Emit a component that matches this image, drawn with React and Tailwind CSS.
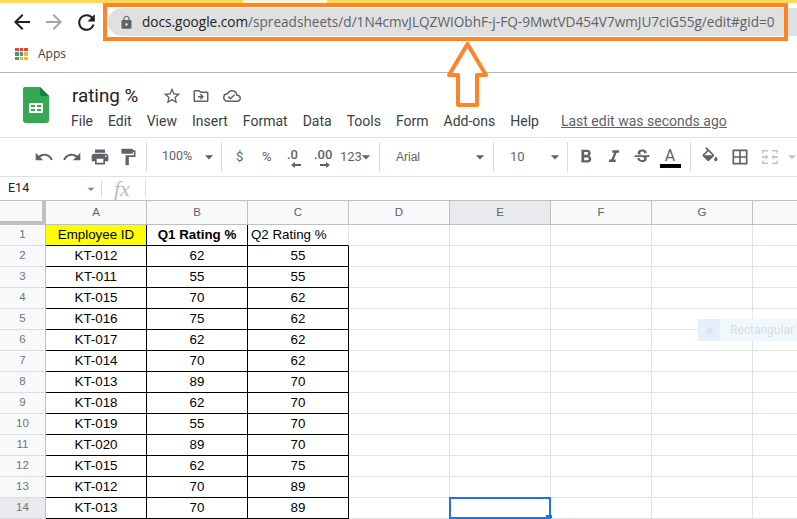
import {
  MdArrowBack,
  MdArrowForward,
  MdArrowDropDown,
  MdBorderAll,
  MdFormatBold,
  MdFormatItalic,
  MdFormatPaint,
  MdLock,
  MdOutlineCloudDone,
  MdOutlineDriveFileMove,
  MdPrint,
  MdRedo,
  MdRefresh,
  MdStarBorder,
  MdStrikethroughS,
  MdUndo,
} from "react-icons/md";

const menuItems = ["File", "Edit", "View", "Insert", "Format", "Data", "Tools", "Form", "Add-ons", "Help"];
const columns = ["A", "B", "C", "D", "E", "F", "G", ""];
const rows = [
  ["KT-012", 62, 55],
  ["KT-011", 55, 55],
  ["KT-015", 70, 62],
  ["KT-016", 75, 62],
  ["KT-017", 62, 62],
  ["KT-014", 70, 62],
  ["KT-013", 89, 70],
  ["KT-018", 62, 70],
  ["KT-019", 55, 70],
  ["KT-020", 89, 70],
  ["KT-015", 62, 75],
  ["KT-012", 70, 89],
  ["KT-013", 70, 89],
];
const appColors = [
  "bg-[#ea4335]", "bg-[#ea4335]", "bg-[#ea4335]",
  "bg-[#34a853]", "bg-[#4285f4]", "bg-[#fbbc04]",
  "bg-[#34a853]", "bg-[#fbbc04]", "bg-[#fbbc04]",
];

function Divider({ className = "" }) {
  return <div className={"w-px h-[30px] bg-[#dadce0] shrink-0 " + className} />;
}

function Tool({ icon: Icon, size = 20, color = "text-[#5f6368]" }) {
  return (
    <div className={"w-[28px] flex justify-center shrink-0 " + color}>
      <Icon size={size} />
    </div>
  );
}

function Caret({ className = "" }) {
  return <MdArrowDropDown size={20} className={"text-[#5f6368] shrink-0 " + className} />;
}

function SheetsLogo() {
  return (
    <svg width="26" height="36" viewBox="0 0 26 36" className="shrink-0">
      <path d="M2 0H17L26 9V33a3 3 0 0 1-3 3H3a3 3 0 0 1-3-3V2a2 2 0 0 1 2-2Z" fill="#34a853" />
      <path d="M17 0L26 9H19a2 2 0 0 1-2-2Z" fill="#188038" />
      <path d="M6 16H20V26H6Z" fill="#fff" />
      <path d="M8 18H12V20H8ZM14 18H18V20H14ZM8 22H12V24H8ZM14 22H18V24H14Z" fill="#34a853" />
    </svg>
  );
}

function MergeIcon() {
  return (
    <svg width="18" height="16" viewBox="0 0 18 16" fill="#c4c6c9">
      <path d="M1 1H7V2.5H2.5V4.5H1ZM11 1H17V4.5H15.5V2.5H11ZM1 11.5H2.5V13.5H7V15H1ZM15.5 11.5H17V15H11V13.5H15.5Z" />
      <path d="M1 7H5V5.5L7.5 8L5 10.5V9H1ZM17 7H13V5.5L10.5 8L13 10.5V9H17Z" />
    </svg>
  );
}

function FillIcon() {
  return (
    <svg width="20" height="20" viewBox="0 0 24 24" fill="#5f6368">
      <path d="M16.56 8.94L7.62 0 6.21 1.41l2.38 2.38-5.15 5.15c-.59.59-.59 1.54 0 2.12l5.5 5.5c.29.29.68.44 1.06.44s.77-.15 1.06-.44l5.5-5.5c.59-.58.59-1.53 0-2.12zM5.21 10L10 5.21 14.79 10H5.21zM19 11.5s-2 2.17-2 3.5c0 1.1.9 2 2 2s2-.9 2-2c0-1.33-2-3.5-2-3.5z" />
    </svg>
  );
}

function Decimal({ label, width, right }) {
  return (
    <div className={"flex flex-col shrink-0 " + width}>
      <span className="text-[13px] leading-[13px] font-medium mt-[2px]">{label}</span>
      <svg width="10" height="6" viewBox="0 0 10 6" className={"mt-[1px] " + (right ? "ml-[6px]" : "ml-[4px]")} fill="#5f6368">
        {right ? <path d="M0 2H6V0L10 3L6 6V4H0Z" /> : <path d="M10 2H4V0L0 3L4 6V4H10Z" />}
      </svg>
    </div>
  );
}

function Cell({ children, className = "" }) {
  return <div className={"relative flex items-center justify-center min-w-0 overflow-visible " + className}>{children}</div>;
}

function Row({ number, data }) {
  const active = number === 14;
  return (
    <>
      <Cell className={"border-r border-b border-r-[#c0c0c0] border-b-[#dadce0] text-[11.5px] text-[#70757a] " + (active ? "bg-[#e8eaed]" : "bg-[#f8f9fa]")}>
        {number}
      </Cell>
      {data.map((value, i) => (
        <Cell key={i} className="border-r border-b border-black text-[13.33px] text-black">
          {value}
        </Cell>
      ))}
      {columns.slice(3).map((c, i) => (
        <Cell key={i} className="border-r border-b border-[#e2e3e3]">
          {active && c === "E" && (
            <div className="absolute -left-px -top-px w-[102px] h-[22px] border-2 border-[#1a73e8]">
              <div className="absolute -right-[3px] -bottom-[2px] w-[6px] h-[4px] bg-[#1a73e8]" />
            </div>
          )}
        </Cell>
      ))}
    </>
  );
}

export default function App() {
  return (
    <div className="relative w-[797px] h-[519px] overflow-hidden bg-white font-['Liberation_Sans',sans-serif]">
      {/* browser chrome */}
      <div className="flex h-[3px]">
        <div className="w-[243px] bg-[#fdd85d]" />
        <div className="w-[84px] bg-[#fff6d8]" />
        <div className="flex-1 bg-[#fdd85d]" />
      </div>
      <div className="flex items-center h-[38px]">
        <div className="flex w-[108px] shrink-0 pl-[11px]">
          <div className="w-[32px] flex justify-start -ml-[1px]"><MdArrowBack size={24} className="text-[#202124]" /></div>
          <div className="w-[32px] flex justify-start"><MdArrowForward size={24} className="text-[#a4a6a8]" /></div>
          <div className="w-[32px] flex justify-start"><MdRefresh size={25} className="text-[#202124]" /></div>
        </div>
        <div className="flex-1 h-[28px] bg-[#e0e0e0] rounded-l-full flex items-center pl-[11px] font-['Open_Sans',sans-serif] text-[13.6px] whitespace-nowrap">
          <MdLock size={15} className="text-[#5f6368] mr-[8px] shrink-0" />
          <span className="text-[#202124]">docs.google.com</span>
          <span className="text-[#5f6368]">/spreadsheets/d/1N4cmvJLQZWIObhF-j-FQ-9MwtVD454V7wmJU7ciG55g/edit#gid=0</span>
        </div>
      </div>
      <div className="flex items-center h-[32px] pl-[15px] pb-[5px] border-b border-[#b7b7b7]">
        <div className="grid grid-cols-3 gap-[1px] w-[13px]">
          {appColors.map((c, i) => <div key={i} className={"h-[3.6px] " + c} />)}
        </div>
        <span className="ml-[10px] text-[12px] text-[#3c4043] font-['Open_Sans',sans-serif]">Apps</span>
      </div>

      {/* docs header */}
      <div className="flex h-[65px] border-b border-[#e0e0e0] pl-[23px] pt-[14px] font-['Roboto',sans-serif]">
        <SheetsLogo />
        <div className="ml-[23px]">
          <div className="flex items-center h-[18px]">
            <span className="text-[18.8px] text-[#202124] w-[90px]">rating %</span>
            <MdStarBorder size={20} className="text-[#5f6368]" />
            <MdOutlineDriveFileMove size={18} className="text-[#5f6368] ml-[10px]" />
            <MdOutlineCloudDone size={18} className="text-[#5f6368] ml-[13px]" />
          </div>
          <div className="flex items-center mt-[6px] -ml-px text-[14px] text-[#3c4043] whitespace-nowrap">
            <div className="flex gap-[15px]">
              {menuItems.map((m) => <span key={m}>{m}</span>)}
            </div>
            <span className="ml-[22px] underline text-[#5f6368]">Last edit was seconds ago</span>
          </div>
        </div>
      </div>

      {/* toolbar */}
      <div className="flex items-center h-[39px] border-b border-[#e0e0e0] pl-[30px] text-[#5f6368] font-['Roboto',sans-serif] text-[13px] whitespace-nowrap">
        <Tool icon={MdUndo} />
        <Tool icon={MdRedo} />
        <Tool icon={MdPrint} />
        <Tool icon={MdFormatPaint} />
        <Divider className="ml-[4px]" />
        <span className="ml-[15px] w-[37px] shrink-0 text-[12.5px] -mt-[2px]">100%</span>
        <Caret />
        <Divider className="ml-[2px]" />
        <span className="ml-[14px] w-[26px] shrink-0">$</span>
        <span className="w-[25px] shrink-0">%</span>
        <Decimal label=".0" width="w-[27px]" />
        <Decimal label=".00" width="w-[26px]" right />
        <span className="w-[22px] shrink-0 text-[13px]">123</span>
        <Caret className="-ml-[6px]" />
        <Divider className="ml-[3px]" />
        <span className="ml-[16px] w-[74px] shrink-0 font-['Liberation_Sans',sans-serif] text-[12px] -mt-px">Arial</span>
        <Caret />
        <Divider className="ml-[3px]" />
        <span className="ml-[16px] w-[35px] shrink-0 -mt-px">10</span>
        <Caret />
        <Divider className="ml-[2px]" />
        <div className="ml-[4px] flex items-center shrink-0">
          <Tool icon={MdFormatBold} size={22} />
          <Tool icon={MdFormatItalic} size={20} />
          <Tool icon={MdStrikethroughS} size={20} />
          <div className="w-[28px] flex flex-col items-center mt-[2px]">
            <span className="text-[16px] leading-[15px]">A</span>
            <div className="w-[21px] h-[4px] bg-black mt-[1px]" />
          </div>
        </div>
        <Divider className="ml-[6px]" />
        <div className="ml-[5px] flex items-center shrink-0">
          <div className="w-[28px] flex justify-center"><FillIcon /></div>
          <div className="w-[2px]" />
          <Tool icon={MdBorderAll} size={20} />
          <div className="w-[2px]" />
          <div className="w-[28px] flex justify-center"><MergeIcon /></div>
          <MdArrowDropDown size={20} className="text-[#c4c6c9] -ml-[2px]" />
        </div>
      </div>

      {/* formula bar */}
      <div className="flex items-center h-[24px] border-b border-[#c0c0c0] text-[12.5px] text-[#202124] font-['Roboto',sans-serif]">
        <span className="ml-[8px] w-[75px]">E14</span>
        <MdArrowDropDown size={16} className="text-[#80868b]" />
        <div className="ml-[2px] w-px h-[17px] bg-[#dadce0]" />
        <span className="ml-[12px] w-[31px] text-[22px] leading-none italic text-[#b9bbbe] font-['Liberation_Serif',serif]">fx</span>
        <div className="w-px h-[17px] bg-[#dadce0]" />
      </div>

      {/* sheet */}
      <div className="grid grid-cols-[46px_repeat(8,101px)] grid-rows-[24px_repeat(14,21px)] font-['Liberation_Sans',sans-serif]">
        <Cell className="bg-[#f8f9fa] border-r-4 border-b-4 border-[#c0c0c0]" />
        {columns.map((c, i) => (
          <Cell key={i} className={"border-r border-b border-[#c0c0c0] text-[11.5px] text-[#5f6368] " + (c === "E" ? "bg-[#e8eaed]" : "bg-[#f8f9fa]")}>
            {c}
          </Cell>
        ))}

        <Cell className="bg-[#f8f9fa] border-r border-b border-r-[#c0c0c0] border-b-[#dadce0] text-[11.5px] text-[#70757a]">1</Cell>
        <Cell className="bg-[#ffff00] border-r border-b border-black text-[13.33px] text-black">Employee ID</Cell>
        <Cell className="border-r border-b border-black text-[13.33px] font-bold text-black whitespace-nowrap">Q1 Rating %</Cell>
        <Cell className="border-r border-b border-r-[#e2e3e3] border-b-black text-[13.33px] text-black !justify-start pl-[3px] whitespace-nowrap">Q2 Rating %</Cell>
        {columns.slice(3).map((c, i) => <Cell key={i} className="border-r border-b border-[#e2e3e3]" />)}

        {rows.map((r, i) => <Row key={i} number={i + 2} data={r} />)}
      </div>

      {/* orange annotation */}
      <div className="absolute left-[103px] top-[3px] w-[685px] h-[38px] border-4 border-[#fe8427]" />
      <svg className="absolute left-[444px] top-[40px]" width="48" height="70" viewBox="0 0 48 70">
        <path d="M23.5 4L42 35H33V65H14V35H5Z" fill="#fff" stroke="#fe8427" strokeWidth="4" strokeLinejoin="round" />
      </svg>

      {/* faded watermark */}
      <div className="absolute left-[698px] top-[319px] w-[99px] h-[22px] flex items-center bg-[#eef7fe]/90 text-[12px] text-[#dcdcdc] font-['Roboto',sans-serif] whitespace-nowrap">
        <div className="w-[22px] h-full bg-[#e4f1fc] flex items-center justify-center shrink-0">
          <div className="w-[7px] h-[7px] rounded-full bg-[#dfe4e8]" />
        </div>
        <span className="ml-[10px]">Rectangular</span>
      </div>
    </div>
  );
}
